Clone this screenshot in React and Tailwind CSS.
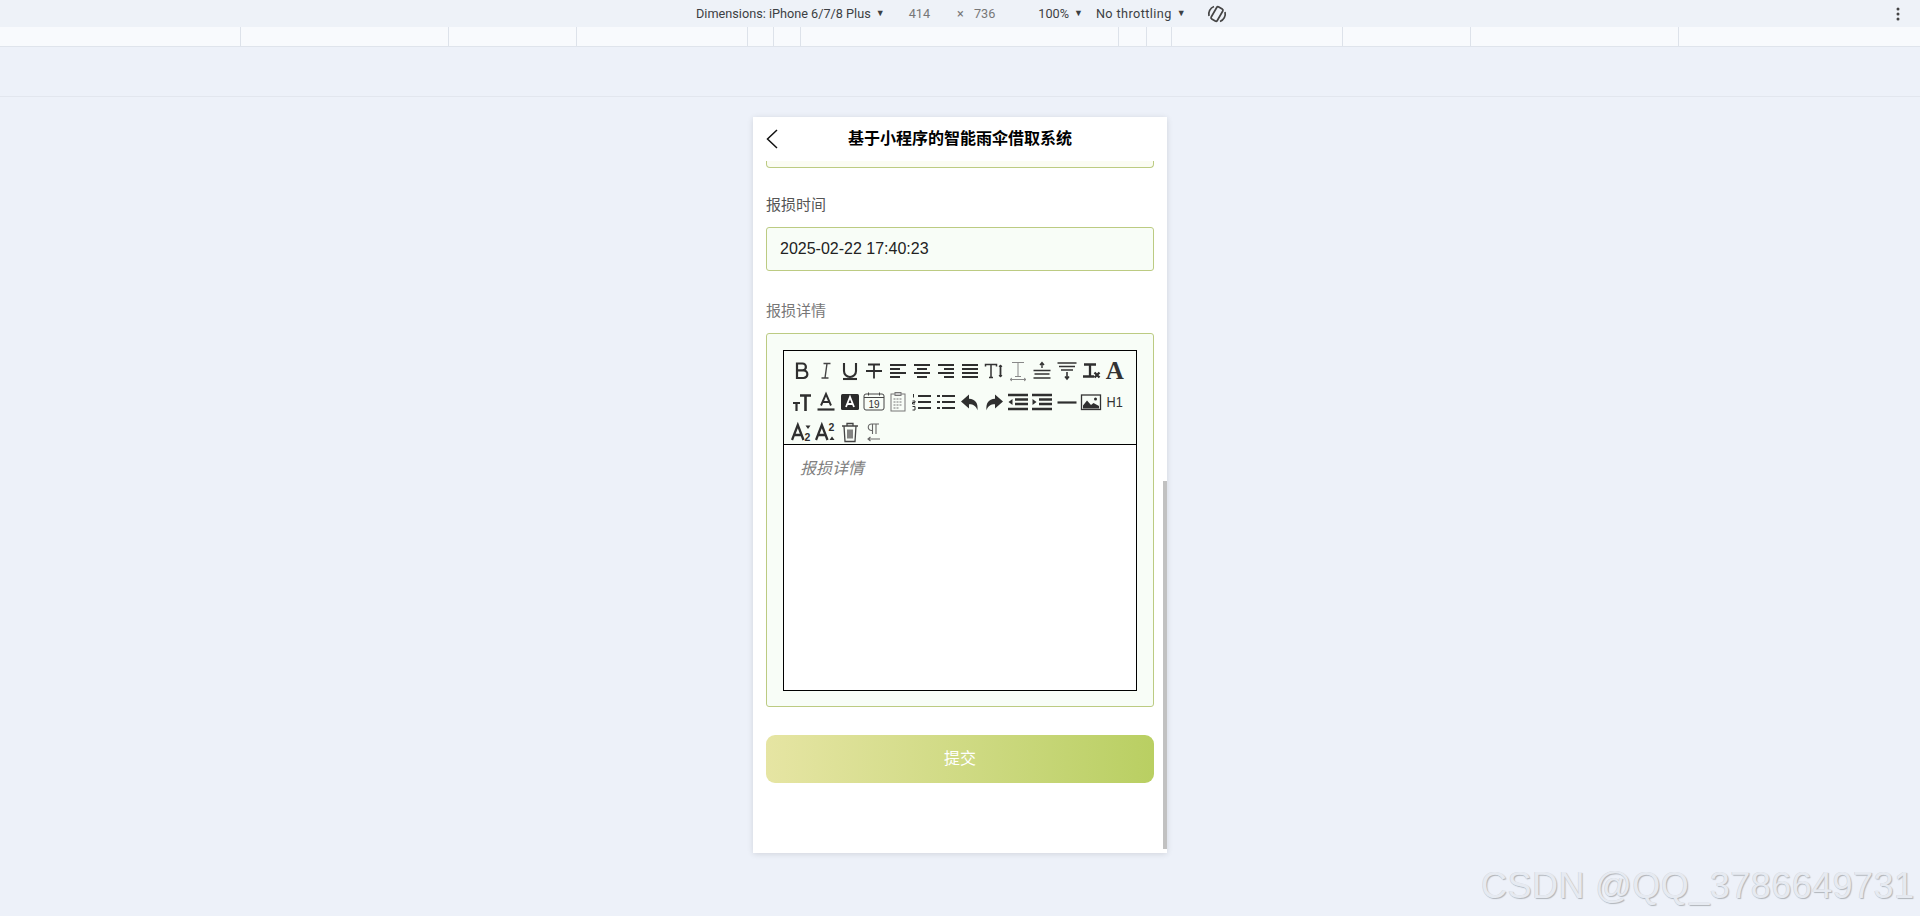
import React from "react";

const S = ({ children, sw = 1.8, c = "#2f2f2f", fill = "none" }) => (
  <svg width="22" height="22" viewBox="0 0 22 22" fill={fill} stroke={c} strokeWidth={sw} strokeLinecap="butt" strokeLinejoin="miter">
    {children}
  </svg>
);

const icons = [
  <S sw={2.2}><path d="M6 3.5h5.500a3.400 3.400 0 0 1 0 6.800H6zM6 10.300h6.500a3.700 3.700 0 0 1 0 7.700H6z" /></S>,
  <S sw={1.4} c="#444"><path d="M8.500 3.500h7M6.500 18h7M12 3.500L10 18" /></S>,
  <S sw={2.100}><path d="M5 3v8a6 6 0 0 0 12 0V3" /><path d="M4 19h14" /></S>,
  <S sw={1.800}><path d="M5 4.500h12M11 4.500v14M3 11h16" /></S>,
  <S sw={1.900}><path d="M3 5h16M3 9h10M3 13h16M3 17h10" /></S>,
  <S sw={1.900}><path d="M3 5h16M6 9h10M3 13h16M6 17h10" /></S>,
  <S sw={1.900}><path d="M3 5h16M9 9h10M3 13h16M9 17h10" /></S>,
  <S sw={1.900}><path d="M3 5h16M3 9h16M3 13h16M3 17h16" /></S>,
  <S sw={1.500} c="#333"><path d="M2.500 6.500V4.500h11v2M8 4.500v13M6 17.500h4" /><path d="M17.500 5v12" strokeWidth="1.800" /><path d="M15.500 7l2-2.500 2 2.500zM15.500 15l2 2.500 2-2.500z" fill="#333" stroke="none" /></S>,
  <S sw={1} c="#888"><path d="M5 2.500h12M11 2.500v14M8 16.500h6M3 19.500h16M5 18l-2 1.500L5 21M17 18l2 1.500-2 1.500" /></S>,
  <S sw={1.400} c="#333"><path d="M11 2.500v5.500M9 5l2-2.500L13 5M2.500 10.500h17M3.500 14h15M2.500 18h17" /></S>,
  <S sw={1.600} c="#333"><path d="M1.500 3h19M3 6.500h16M5 10h12M11 12v7M9 16.500l2 2.500 2-2.500" /></S>,
  <S sw={2.300}><path d="M4 4.500h12M10 4.500v11M3 16.500h11" /><path d="M14.500 12.500l5 5M19.500 12.500l-5 5" /></S>,
  <span className="block text-[25px] leading-[22px] font-bold text-[#333] font-['Liberation_Serif',serif]">A</span>,

  <S sw={2.600}><path d="M9 4.500h11M14.500 4.500V20" /><path d="M2 12h7M5.500 12v8" strokeWidth="2.200" /></S>,
  <S sw={1.900}><path d="M6 14.500L11 3l5 11.500M7.500 11h7" /><path d="M2.500 18.500h17" strokeWidth="2.200" /></S>,
  <S sw={1.800} c="#fff"><rect x="2" y="3" width="18" height="16" rx="1.500" fill="#2b2b2b" stroke="none" /><path d="M7 16l4-10 4 10M8.300 13h5.400" /></S>,
  <svg width="22" height="22" viewBox="0 0 22 22" fill="none" stroke="#444" strokeWidth="1"><rect x="1" y="3" width="20" height="16" rx="2" /><path d="M1 6.500h20M5.500 1.500v3M16.500 1.500v3" /><text x="11" y="16.500" textAnchor="middle" fontSize="10" fill="#333" stroke="none" fontFamily="Liberation Sans">19</text></svg>,
  <S sw={1} c="#777"><rect x="4" y="3" width="14" height="17" /><rect x="8" y="1.500" width="6" height="3" fill="#ccc" /><path d="M6.500 8h9M6.500 11h9M6.500 14h9M6.500 17h6" strokeDasharray="2 1" /></S>,
  <S sw={1.800}><path d="M7 5h13M7 11h13M7 17h13" /><path d="M2.500 3v3.500M1.500 10h2.500v1.500H1.500V13H4M1.500 15.500H4V19H1.500" strokeWidth="1" /></S>,
  <S sw={1.800}><path d="M7 5h13M7 11h13M7 17h13M2 5h3M2 11h3M2 17h3" /></S>,
  <S sw={0} fill="#2f2f2f"><path d="M10 3.500L2 10.500l8 7v-4.200c4.500 0 7 1.800 8.500 6 .7-7-2-11.200-8.500-11.500z" /></S>,
  <S sw={0} fill="#2f2f2f"><path d="M12 3.500l8 7-8 7v-4.200c-4.500 0-7 1.800-8.500 6-.7-7 2-11.200 8.500-11.500z" /></S>,
  <S sw={2.500}><path d="M1 4h20M8 8.500h13M8 13h13M1 18h20" /><path d="M1.500 11L5.500 8v6z" fill="#2f2f2f" stroke="none" /></S>,
  <S sw={2.500}><path d="M1 4h20M8 8.500h13M8 13h13M1 18h20" /><path d="M5.500 11L1.500 8v6z" fill="#2f2f2f" stroke="none" /></S>,
  <S sw={2.200}><path d="M1.500 11.500h19" /></S>,
  <svg width="22" height="22" viewBox="0 0 22 22" fill="#2f2f2f" stroke="none"><rect x="1.500" y="4" width="19" height="14.500" fill="none" stroke="#333" strokeWidth="1.300" /><path d="M3 17.500v-3l4-5 4 4.500 2.500-2 5.500 3v2.500z" /><circle cx="15.500" cy="8" r="1.500" /></svg>,
  <span className="block scale-x-[0.85] text-center font-['Liberation_Sans',sans-serif] text-[15px] leading-[22px] text-[#333]">H1</span>,

  <svg width="22" height="22" viewBox="0 0 22 22" fill="none" stroke="#2f2f2f" strokeWidth="2.300"><path d="M1 19L6.800 4l5.700 15M3 14h8" /><text x="13.500" y="20" fontSize="10.500" fontWeight="bold" fill="#2f2f2f" stroke="none" fontFamily="Liberation Sans">2</text><path d="M14.500 4.500h5l-2.500 3.500z" fill="#2f2f2f" stroke="none" /></svg>,
  <svg width="22" height="22" viewBox="0 0 22 22" fill="none" stroke="#2f2f2f" strokeWidth="2.300"><path d="M1 19L6.800 4l5.700 15M3 14h8" /><text x="13.500" y="10" fontSize="10.500" fontWeight="bold" fill="#2f2f2f" stroke="none" fontFamily="Liberation Sans">2</text><path d="M14.500 19h5l-2.500-3.500z" fill="#2f2f2f" stroke="none" /></svg>,
  <S sw={1.300} c="#444"><path d="M3 5h16M8 5V2.500h6V5M5 5l1 15.500h10L17 5M9 8.500v9M11 8.500v9M13 8.500v9" /></S>,
  <S sw={1.100} c="#666"><path d="M9.500 3v10M13 3v10M16 3H8.500a3 3 0 0 0 0 6.500h1M5 18h12M7.500 16l-2.500 2 2.500 2" /></S>,
];

const TICKS = [241, 449, 577, 748, 774, 801, 1119, 1147, 1172, 1343, 1471, 1679];
const cjk = "font-['Liberation_Sans','Noto_Sans_CJK_SC',sans-serif]";

export default function App() {
  const segs = TICKS.map((t, i) => t - (i ? TICKS[i - 1] : 0));
  return (
    <div className={`relative h-[916px] w-[1920px] overflow-hidden bg-[#edf1f9] ${cjk}`}>
      <div className="flex h-[27px] items-center bg-[#eef2f8] pl-[696px] pr-[20px] font-['Roboto',sans-serif] text-[12.700px] text-[#3c4043]">
        <span>Dimensions: iPhone 6/7/8 Plus</span>
        <span className="ml-[5px] text-[9px]">▼</span>
        <span className="ml-[24px] text-[#777]">414</span>
        <span className="ml-[27px] text-[#777]">×</span>
        <span className="ml-[10px] text-[#777]">736</span>
        <span className="ml-[43px]">100%</span>
        <span className="ml-[5px] text-[9px]">▼</span>
        <span className="ml-[13px] tracking-[0.4px]">No throttling</span>
        <span className="ml-[5px] text-[9px]">▼</span>
        <svg className="ml-[20px]" width="22" height="22" viewBox="0 0 22 22" fill="none" stroke="#444" strokeWidth="1.700">
          <rect x="7.500" y="4" width="7" height="14" rx="1.500" transform="rotate(30 11 11)" />
          <path d="M3 13a8 8 0 0 1 5-9.500M19 9a8 8 0 0 1-5 9.500" />
        </svg>
        <svg className="ml-auto" width="4" height="14" viewBox="0 0 4 14" fill="#444">
          <circle cx="2" cy="2" r="1.500" />
          <circle cx="2" cy="7" r="1.500" />
          <circle cx="2" cy="12" r="1.500" />
        </svg>
      </div>

      <div className="flex h-[20px] border-b border-[#dfe4ec] bg-[#f8fafd]">
        {segs.map((w, i) => (
          <div key={i} style={{ width: w }} className="box-border border-r border-[#dde2ea]" />
        ))}
      </div>

      <div className="h-[50px] border-b border-[#e2e6ee]" />

      <div className="flex justify-center pt-[20px]">
        <div className="relative h-[736px] w-[414px] overflow-hidden bg-white shadow-[0_1px_6px_rgba(0,0,0,0.12)]">
          <div className="grid h-[44px] grid-cols-[1fr_auto_1fr] items-center px-[13px]">
            <svg className="-mt-[1px]" width="12" height="20" viewBox="0 0 12 20" fill="none" stroke="#111" strokeWidth="1.500">
              <path d="M11 1L1.500 10 11 19" />
            </svg>
            <h1 className="text-[16px] font-bold text-black">基于小程序的智能雨伞借取系统</h1>
            <span />
          </div>

          <div className="mx-[13px] h-[7px] rounded-b-[4px] border-b border-x border-[#bccb82] bg-[#fbfcf3]" />

          <div className="mx-[13px] mt-[26px]">
            <div className="text-[15px] leading-[22px] text-[#555]">报损时间</div>
            <div className="mt-[11px] flex h-[44px] items-center rounded-[3px] border border-[#bccb82] bg-[#f8fdf7] pl-[13px] text-[16px] text-[#222]">
              2025-02-22 17:40:23
            </div>

            <div className="mt-[29px] text-[15px] leading-[22px] text-[#777]">报损详情</div>
            <div className="mt-[11px] h-[374px] rounded-[3px] border border-[#bccb82] bg-[#f8fdf7] pl-[16px] pt-[16px]">
              <div className="flex h-[341px] w-[354px] flex-col border border-black bg-white">
                <div className="flex h-[94px] flex-wrap content-start gap-y-[8.500px] border-b border-black bg-[#f8fdf7] pl-[5.500px] pt-[9px]">
                  {icons.map((ic, i) => (
                    <div key={i} className="flex h-[22px] w-[24.100px] items-center justify-center">
                      {ic}
                    </div>
                  ))}
                </div>
                <div className="pl-[16px] pt-[12px] text-[16px] italic leading-[24px] text-[#808080]">报损详情</div>
              </div>
            </div>

            <button className="mt-[28px] flex h-[48px] w-[388px] items-center justify-center rounded-[9px] bg-gradient-to-r from-[#e6e5a3] to-[#b9cf62] text-[16px] text-white">
              提交
            </button>
          </div>

          <div className="absolute bottom-[4px] right-0 top-[364px] w-[4px] bg-[#c1c1c1]" />
        </div>
      </div>

      <div className="absolute left-[1481px] top-[866px] font-['Liberation_Sans',sans-serif] text-[36px] leading-[40px] tracking-[0.46px] text-[#e6eaf1] [text-shadow:1px_1px_1px_#b0b4ba,-0.5px_-0.5px_0.5px_#d0d4da]">
        CSDN @QQ_3786649731
      </div>
    </div>
  );
}
